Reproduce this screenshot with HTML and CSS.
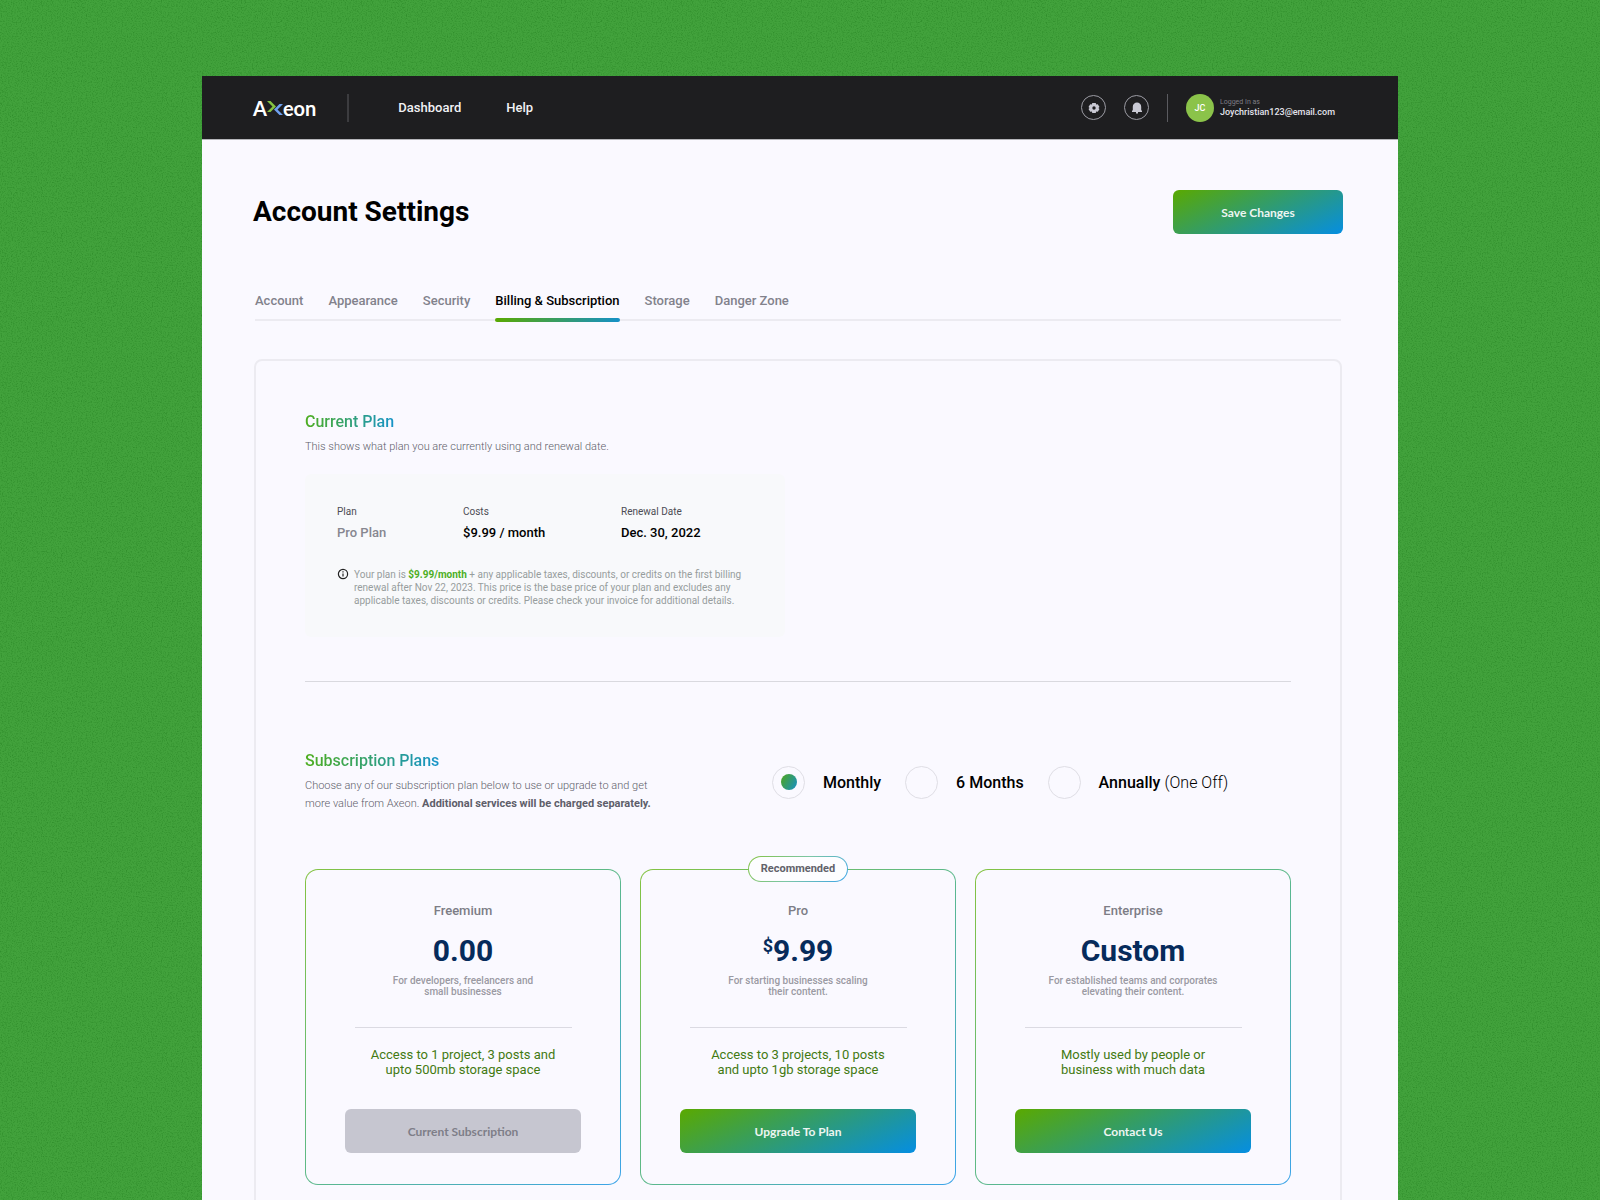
FILE: index.html
```html
<!DOCTYPE html>
<html lang="en">
<head>
    <meta charset="UTF-8">
    <meta name="viewport" content="width=device-width, initial-scale=1.0">
    <title>Axeon - Account Settings</title>
    <link rel="stylesheet" href="styles.css">
</head>
<body>
    <!-- Grain over the green backdrop -->
    <svg class="grain" aria-hidden="true">
        <filter id="noise">
            <feTurbulence type="fractalNoise" baseFrequency="0.8" numOctaves="2" seed="4"/>
            <feColorMatrix values="0 0 0 0 0  0 0 0 0 0.1  0 0 0 0 0  0 0 0 1.6 -0.72"/>
        </filter>
        <rect width="100%" height="100%" filter="url(#noise)"/>
    </svg>

    <div class="window">
        <header class="topbar">
            <a class="logo" href="#" aria-label="Axeon">
                <span>A</span>
                <svg width="16" height="16" viewBox="0 0 16 16" aria-hidden="true">
                    <path d="M0 1h3.500l5.500 5.500L3.500 12H0l5.500-5.500z" fill="#84c341"/>
                    <path d="M16 4h-3.500L7 9.500l5.500 5.500H16l-5.500-5.500z" fill="#6ea0f0"/>
                </svg>
                <span>eon</span>
            </a>
            <nav class="main-nav">
                <a href="#">Dashboard</a>
                <a href="#">Help</a>
            </nav>
            <div class="tools">
                <button class="icon-btn" type="button" aria-label="Settings">
                    <svg width="12" height="12" viewBox="0 0 12 12" aria-hidden="true">
                        <path fill="#c9c9d3" fill-rule="evenodd" d="M4.300 1h3.400l.5 1.500 1.600-.3L11.500 5l-1.100 1 1.100 1-1.700 2.800-1.600-.3-.5 1.500H4.300l-.5-1.500-1.600.3L.5 7l1.100-1L.5 5l1.700-2.800 1.600.3zM6 4.300a1.700 1.700 0 1 0 0 3.400 1.700 1.700 0 0 0 0-3.400z"/>
                    </svg>
                </button>
                <button class="icon-btn" type="button" aria-label="Notifications">
                    <svg width="12" height="12" viewBox="0 0 12 12" aria-hidden="true">
                        <path fill="#c9c9d3" d="M6 .5a4.200 4.200 0 0 1 4.200 4.200V8l.8 1v1H1V9l.8-1V4.700A4.200 4.200 0 0 1 6 .5zM5 10h2v1.500H5z"/>
                    </svg>
                </button>
                <div class="user">
                    <span class="avatar">JC</span>
                    <p><small>Logged In as</small>Joychristian123@email.com</p>
                </div>
            </div>
        </header>

        <main class="content">
            <div class="page-head">
                <h1>Account Settings</h1>
                <button class="btn save" type="button">Save Changes</button>
            </div>

            <nav class="tabs">
                <a href="#">Account</a>
                <a href="#">Appearance</a>
                <a href="#">Security</a>
                <a class="active" href="#" aria-current="page">Billing &amp; Subscription</a>
                <a href="#">Storage</a>
                <a href="#">Danger Zone</a>
            </nav>

            <div class="panel">
                <section class="current">
                    <h2>Current Plan</h2>
                    <p class="lead">This shows what plan you are currently using and renewal date.</p>
                    <div class="plan-box">
                        <dl>
                            <div><dt>Plan</dt><dd class="muted">Pro Plan</dd></div>
                            <div><dt>Costs</dt><dd>$9.99 / month</dd></div>
                            <div><dt>Renewal Date</dt><dd>Dec. 30, 2022</dd></div>
                        </dl>
                        <div class="note">
                            <svg width="12" height="12" viewBox="0 0 12 12" aria-hidden="true">
                                <circle cx="6" cy="6" r="4.600" fill="none" stroke="#222" stroke-width="1.200"/>
                                <path d="M6 5.500v3M6 3.300v1.200" stroke="#222" stroke-width="1.200"/>
                            </svg>
                            <p>Your plan is <strong>$9.99/month</strong> + any applicable taxes, discounts, or credits on the first billing<br>
                            renewal after Nov 22, 2023. This price is the base price of your plan and excludes any<br>
                            applicable taxes, discounts or credits. Please check your invoice for additional details.</p>
                        </div>
                    </div>
                </section>

                <section class="plans">
                    <div class="plans-head">
                        <div>
                            <h2>Subscription Plans</h2>
                            <p class="lead">Choose any of our subscription plan below to use or upgrade to and get<br>
                            more value from Axeon. <strong>Additional services will be charged separately.</strong></p>
                        </div>
                        <div class="periods" role="radiogroup" aria-label="Billing period">
                            <label><input type="radio" name="period" checked><span>Monthly</span></label>
                            <label><input type="radio" name="period"><span>6 Months</span></label>
                            <label><input type="radio" name="period"><span>Annually <em>(One Off)</em></span></label>
                        </div>
                    </div>

                    <div class="cards">
                        <article class="card">
                            <h3>Freemium</h3>
                            <p class="price">0.00</p>
                            <p class="desc">For developers, freelancers and<br>small businesses</p>
                            <hr>
                            <p class="feature">Access to 1 project, 3 posts and<br>upto 500mb storage space</p>
                            <button class="btn" type="button" disabled>Current Subscription</button>
                        </article>
                        <article class="card">
                            <span class="badge">Recommended</span>
                            <h3>Pro</h3>
                            <p class="price"><sup>$</sup>9.99</p>
                            <p class="desc">For starting businesses scaling<br>their content.</p>
                            <hr>
                            <p class="feature">Access to 3 projects, 10 posts<br>and upto 1gb storage space</p>
                            <button class="btn" type="button">Upgrade To Plan</button>
                        </article>
                        <article class="card">
                            <h3>Enterprise</h3>
                            <p class="price">Custom</p>
                            <p class="desc">For established teams and corporates<br>elevating their content.</p>
                            <hr>
                            <p class="feature">Mostly used by people or<br>business with much data</p>
                            <button class="btn" type="button">Contact Us</button>
                        </article>
                    </div>
                </section>
            </div>
        </main>
    </div>
</body>
</html>
```
FILE: styles.css
```css
* {
    box-sizing: border-box;
}
html {
    height: 100%;
    overflow: hidden;
}
body {
    margin: 0;
    padding: 76px 202px 0;
    min-height: 100%;
    overflow: hidden;
    background: #42a23c;
    font-family: Roboto, "Liberation Sans", sans-serif;
    font-size: 13px;
    color: #000;
}
h1, h2, h3, p, dl, dd {
    margin: 0;
}
a {
    color: inherit;
    text-decoration: none;
}
.grain {
    position: absolute;
    inset: 0;
    width: 100%;
    height: 100%;
    opacity: 0.4;
}
.window {
    position: relative;
    min-height: calc(100vh - 76px);
    background: #faf9ff;
}

/* Top bar */
.topbar {
    display: flex;
    align-items: center;
    height: 64px;
    padding: 0 57px 0 51px;
    background: #1e1e20;
    border-bottom: 1px solid #b5b5ba;
}
.logo {
    display: flex;
    align-items: center;
    height: 28px;
    padding-right: 31px;
    border-right: 2px solid #3c3c3f;
    font: 700 20px Lato, sans-serif;
    color: #fff;
}
.main-nav {
    display: flex;
    gap: 45px;
    margin-left: 49px;
    font-weight: 500;
    color: #f1f1f4;
}
.tools {
    display: flex;
    align-items: center;
    gap: 18px;
    margin-left: auto;
}
.icon-btn {
    display: grid;
    place-items: center;
    width: 25px;
    height: 25px;
    padding: 0;
    background: none;
    border: 1px solid #9b9ba3;
    border-radius: 50%;
}
.user {
    display: flex;
    align-items: center;
    gap: 6px;
    height: 28px;
    padding-left: 18px;
    border-left: 1px solid #5b5b60;
    font-size: 9px;
    line-height: 12px;
    font-weight: 500;
    color: #e4e4ec;
}
.user p {
    min-width: 121px;
}
.user small {
    display: block;
    font-size: 7px;
    line-height: 8px;
    font-weight: 400;
    color: #7d7d84;
}
.avatar {
    display: grid;
    place-items: center;
    width: 28px;
    height: 28px;
    border-radius: 50%;
    background: #8bc34a;
    color: #fff;
}

/* Page head */
.content {
    padding: 50px 55px 0 51px;
}
.page-head {
    display: flex;
    align-items: center;
    justify-content: space-between;
}
h1 {
    font-size: 28px;
    line-height: 44px;
}
.btn {
    width: 236px;
    height: 44px;
    padding: 0;
    border: none;
    border-radius: 6px;
    background: linear-gradient(155deg, #5aa900, #058ee2);
    font: 700 12px Lato, sans-serif;
    color: #edf5f2;
}
.btn:disabled {
    background: #c6c6d0;
    color: #7e7e88;
}
.save {
    width: 170px;
}

/* Tabs */
.tabs {
    display: flex;
    gap: 25px;
    margin: 58px 2px 38px;
    border-bottom: 2px solid #ecebf1;
    font-weight: 500;
    line-height: 18px;
    color: #82828c;
}
.tabs a {
    padding-bottom: 9px;
}
.tabs .active {
    position: relative;
    color: #000;
}
.tabs .active::after {
    content: "";
    position: absolute;
    left: 0;
    right: 0;
    bottom: -3px;
    height: 4px;
    border-radius: 2px;
    background: linear-gradient(100deg, #5aa900, #1590c8);
}

/* Panel */
.panel {
    margin: 0 1px;
    padding: 51px 49px 60px;
    border: 2px solid #ecebf1;
    border-radius: 8px;
}
h2 {
    width: max-content;
    font-size: 16px;
    line-height: 20px;
    font-weight: 500;
    background: linear-gradient(100deg, #4fae1c, #1593cc);
    -webkit-background-clip: text;
    background-clip: text;
    color: transparent;
}
.lead {
    margin-top: 6px;
    font-size: 11px;
    line-height: 18px;
    font-weight: 300;
    color: #5e5e6a;
}
.lead strong {
    font-weight: 700;
}
.current {
    padding-bottom: 44px;
    border-bottom: 1px solid #d9d9df;
}
.plan-box {
    width: 480px;
    margin-top: 18px;
    padding: 31px 32px 30px;
    border-radius: 6px;
    background: #f8f9fb;
}
.plan-box dl {
    display: grid;
    grid-template-columns: 126px 158px auto;
}
.plan-box dt {
    font-size: 10px;
    line-height: 14px;
    color: #4c4c54;
}
.plan-box dd {
    margin-top: 5px;
    line-height: 18px;
    font-weight: 500;
}
.plan-box .muted {
    color: #878790;
}
.note {
    display: flex;
    gap: 5px;
    margin-top: 26px;
    font-size: 10px;
    line-height: 13px;
    color: #979d9d;
}
.note p {
    white-space: nowrap;
}
.note strong {
    color: #4caf1f;
}

/* Subscription plans */
.plans {
    padding-top: 69px;
}
.plans-head {
    display: grid;
    grid-template-columns: 467px 1fr;
    align-items: center;
}
.periods {
    display: flex;
    gap: 24px;
    font-size: 16px;
    font-weight: 500;
}
.periods label {
    display: flex;
    align-items: center;
    gap: 18px;
}
.periods em {
    font-style: normal;
    font-weight: 300;
}
.periods input {
    appearance: none;
    display: grid;
    place-items: center;
    width: 33px;
    height: 33px;
    margin: 0;
    border: 1px solid #dfdee5;
    border-radius: 50%;
}
.periods input:checked::before {
    content: "";
    width: 16px;
    height: 16px;
    border-radius: 50%;
    background: linear-gradient(120deg, #4fa51a, #1590c8);
}
.cards {
    display: grid;
    grid-template-columns: repeat(3, 1fr);
    gap: 19px;
    margin-top: 56px;
}
.card {
    position: relative;
    display: flex;
    flex-direction: column;
    align-items: center;
    padding: 31px 39px;
    border: 1px solid transparent;
    border-radius: 13px;
    background: linear-gradient(#faf9ff, #faf9ff) padding-box,
                linear-gradient(135deg, #84c341, #5cb98a 50%, #3ba4ea) border-box;
    text-align: center;
}
.badge {
    position: absolute;
    top: -14px;
    padding: 0 12px;
    border: 1px solid transparent;
    border-radius: 13px;
    background: linear-gradient(#fdfdff, #fdfdff) padding-box,
                linear-gradient(135deg, #84c341, #7cc6a6 50%, #3ba4ea) border-box;
    font-size: 11px;
    line-height: 24px;
    font-weight: 700;
    color: #62626a;
}
.card h3 {
    font-size: 13px;
    line-height: 20px;
    font-weight: 500;
    color: #7d7d86;
}
.price {
    margin-top: 12px;
    font-size: 30px;
    line-height: 36px;
    font-weight: 700;
    color: #062b5b;
}
.price sup {
    font-size: 18px;
    line-height: 0;
    vertical-align: 9px;
}
.desc {
    margin-top: 6px;
    font-size: 10px;
    line-height: 11px;
    font-weight: 500;
    color: #9a9aa3;
}
.card hr {
    width: 217px;
    margin: 30px 0 19px;
    border: none;
    border-top: 1px solid #dbdae2;
}
.feature {
    line-height: 15px;
    color: #437a12;
}
.card .btn {
    width: 100%;
    margin-top: 32px;
}
```
